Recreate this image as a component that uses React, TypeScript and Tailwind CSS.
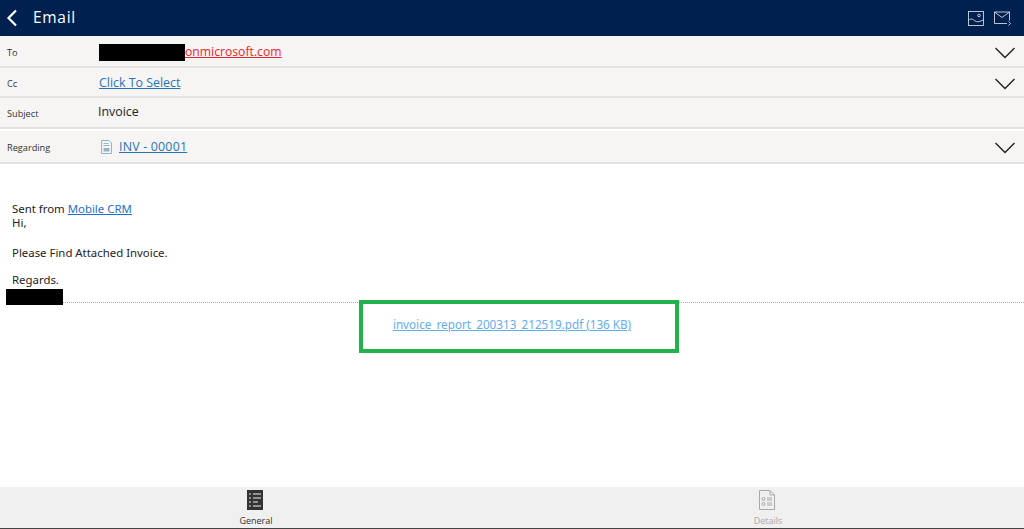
import React from "react";

const ui = "font-['Open_Sans','Noto_Sans',sans-serif]";

function Chevron({ className = "" }: { className?: string }) {
  return (
    <svg width="20" height="12" viewBox="0 0 20 12" className={"shrink-0 " + className} fill="none" stroke="#222" strokeWidth="1.4">
      <path d="M0.5 1 L10 10.5 L19.5 1" />
    </svg>
  );
}

function Row({ label, children, chevron = true, className = "", chevronClass = "", labelClass = "" }: { label: string; children: React.ReactNode; chevron?: boolean; className?: string; chevronClass?: string; labelClass?: string }) {
  return (
    <div className={"flex items-center bg-[#f6f5f3] border-b-2 border-[#e2e2e0] pr-[9px] shrink-0 " + className}>
      <div className={"w-[99px] pl-[7px] text-[9.2px] font-medium text-[#333] " + labelClass}>{label}</div>
      <div className="flex-1 flex items-center text-[12.4px]">{children}</div>
      {chevron && <Chevron className={chevronClass} />}
    </div>
  );
}

export default function App() {
  return (
    <div className={"h-[529px] w-[1024px] flex flex-col bg-white overflow-hidden relative " + ui}>
      <header className="h-9 bg-[#002050] flex items-center text-white shrink-0 pr-[12px]">
        <svg width="12" height="18" viewBox="0 0 12 18" fill="none" stroke="#fff" strokeWidth="2.2" className="ml-[6px]">
          <path d="M10 1.5 L2.5 9 L10 16.5" />
        </svg>
        <span className="ml-[15px] text-[15.5px] tracking-[0.7px]">Email</span>
        <div className="ml-auto flex items-center gap-[10px]">
          <svg width="16" height="15" viewBox="0 0 16 15" fill="none" stroke="#e8ecf2" strokeWidth="0.8">
            <rect x="0.5" y="0.5" width="15" height="14" />
            <path d="M0.5 9.5 C3 7 5 8 7 10 C9 11.5 12 10.5 15.5 9" />
            <circle cx="11" cy="4.5" r="1.3" />
          </svg>
          <svg width="18" height="15" viewBox="0 0 18 15" fill="none" stroke="#e8ecf2" strokeWidth="0.8">
            <path d="M13 12.5 H0.5 V1 H15.5 V9.5" />
            <path d="M0.5 1 L8 6.5 L15.5 1" />
            <path d="M14.5 10.5 L16.5 12.5 L14.5 14.5" />
          </svg>
        </div>
      </header>

      <Row label="To" className="h-[32px] pt-[3px]">
        <span className="w-[86px] h-[17px] bg-black" />
        <span className="text-[#f0222c] underline leading-none text-[12.2px]">onmicrosoft.com</span>
      </Row>
      <Row label="Cc" className="h-[30px] pt-[3px]">
        <span className="text-[#2a73b5] underline">Click To Select</span>
      </Row>
      <Row label="Subject" chevron={false} className="h-[31px] pb-[1px]" labelClass="mt-[3px]">
        <span className="text-[#222] -ml-px">Invoice</span>
      </Row>
      <div className="h-[2px] bg-white shrink-0" />
      <Row label="Regarding" className="h-[33px] pt-[2px]" chevronClass="mt-[1px]">
        <svg width="11" height="14" viewBox="0 0 11 14" fill="none" stroke="#8fb4d2" strokeWidth="1" className="ml-[2px]">
          <path d="M0.5 0.5 H8 L10.5 3 V13.5 H0.5 Z" />
          <path d="M2.5 3.5 H7.5 M2.5 5.5 H8.5" />
          <rect x="2.5" y="8" width="6" height="3.5" fill="#8fb4d2" stroke="none" />
        </svg>
        <span className="ml-[7px] text-[#2a73b5] underline tracking-[0.2px]">INV - 00001</span>
      </Row>

      <main className="flex-1 relative font-['Noto_Sans','Liberation_Sans',sans-serif]">
        <div className="pt-[38px] pl-3 text-[11.4px] leading-[14px] text-[#222]">
          <div>
            Sent from <span className="text-[#1e6fd0] underline">Mobile CRM</span>
          </div>
          <div>Hi,</div>
          <div className="mt-[16px]">Please Find Attached Invoice.</div>
          <div className="mt-[13px]">Regards.</div>
        </div>
        <div className="flex items-end mt-[2px]">
          <div className="w-[57px] h-[16px] bg-black ml-[6px] shrink-0" />
          <div className="flex-1 mb-[2px] border-b border-dotted border-[#6cbcff]" />
        </div>
        <div className="text-center mt-[12px] text-[11.7px] leading-[14px]">
          <span className="text-[#63adf2] underline">invoice_report_200313_212519.pdf (136 KB)</span>
        </div>
        <div className="absolute left-[359px] top-[136px] w-[320px] h-[53px] border-[4px] border-[#22b14c]" />
      </main>

      <footer className="h-[42px] bg-[#f0f0f0] border-b border-[#444] flex shrink-0 text-[9px]">
        <div className="flex-1 flex flex-col items-center pt-[3px] text-[#333]">
          <svg width="16" height="20" viewBox="0 0 16 20" className="-ml-[2px]">
            <rect width="16" height="20" fill="#333" />
            <path d="M2 4 H4 M2 8 H4 M2 12 H4 M2 16 H4" stroke="#f0f0f0" strokeWidth="1" />
            <path d="M6 4 H14 M6 8 H14 M6 12 H11 M6 16 H14" stroke="#f0f0f0" strokeWidth="1" />
          </svg>
          <span className="mt-[4px]">General</span>
        </div>
        <div className="flex-1 flex flex-col items-center pt-[3px] text-[#a8a8a8]">
          <svg width="16" height="20" viewBox="0 0 16 20" fill="none" stroke="#a8a8a8" strokeWidth="1" className="-ml-[2px]">
            <path d="M0.5 0.5 H11 L15.5 5 V19.5 H0.5 Z" />
            <path d="M11 0.5 V5 H15.5" />
            <circle cx="4.5" cy="9" r="1.5" />
            <circle cx="4.5" cy="14" r="1.5" />
            <path d="M8 8 H13 M8 10 H13 M8 13 H13 M8 15 H13" />
          </svg>
          <span className="mt-[4px]">Details</span>
        </div>
      </footer>
    </div>
  );
}
